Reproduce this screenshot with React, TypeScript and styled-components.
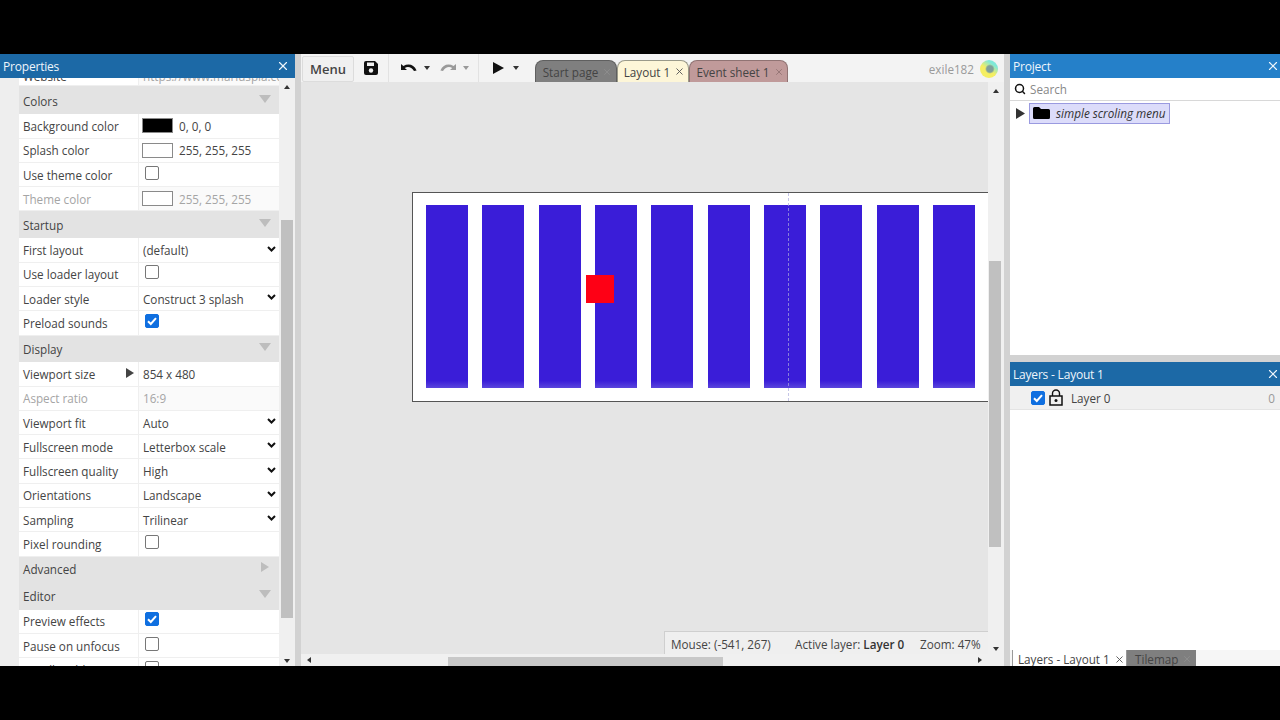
import styled, { createGlobalStyle } from 'styled-components'
import { Search, X } from 'lucide-react'

const GlobalStyle = createGlobalStyle`
  html, body {
    margin: 0;
    padding: 0;
    background: #000;
  }
  * {
    box-sizing: border-box;
  }
`

type PropRow =
  | { kind: 'section'; label: string; closed?: boolean; height: number; nudge?: boolean }
  | { kind: 'color'; label: string; swatch: string; value: string; disabled?: boolean }
  | { kind: 'check'; label: string; checked?: boolean }
  | { kind: 'select'; label: string; value: string }
  | { kind: 'text'; label: string; value: string; disabled?: boolean; expander?: boolean; clipped?: boolean }

const rows: PropRow[] = [
  { kind: 'text', label: 'Website', value: 'https://www.mariuspla.co', clipped: true },
  { kind: 'section', label: 'Colors', height: 28, nudge: true },
  { kind: 'color', label: 'Background color', swatch: '#000', value: '0, 0, 0' },
  { kind: 'color', label: 'Splash color', swatch: '#fff', value: '255, 255, 255' },
  { kind: 'check', label: 'Use theme color' },
  { kind: 'color', label: 'Theme color', swatch: '#fff', value: '255, 255, 255', disabled: true },
  { kind: 'section', label: 'Startup', height: 27, nudge: true },
  { kind: 'select', label: 'First layout', value: '(default)' },
  { kind: 'check', label: 'Use loader layout' },
  { kind: 'select', label: 'Loader style', value: 'Construct 3 splash' },
  { kind: 'check', label: 'Preload sounds', checked: true },
  { kind: 'section', label: 'Display', height: 26.6 },
  { kind: 'text', label: 'Viewport size', value: '854 x 480', expander: true },
  { kind: 'text', label: 'Aspect ratio', value: '16:9', disabled: true },
  { kind: 'select', label: 'Viewport fit', value: 'Auto' },
  { kind: 'select', label: 'Fullscreen mode', value: 'Letterbox scale' },
  { kind: 'select', label: 'Fullscreen quality', value: 'High' },
  { kind: 'select', label: 'Orientations', value: 'Landscape' },
  { kind: 'select', label: 'Sampling', value: 'Trilinear' },
  { kind: 'check', label: 'Pixel rounding' },
  { kind: 'section', label: 'Advanced', closed: true, height: 25 },
  { kind: 'section', label: 'Editor', height: 28 },
  { kind: 'check', label: 'Preview effects', checked: true },
  { kind: 'check', label: 'Pause on unfocus' },
  { kind: 'check', label: 'Bundle addons' },
]

const bars = Array.from({ length: 10 }, (_, i) => i)

function Chevron() {
  return (
    <svg width="9" height="6" viewBox="0 0 9 6">
      <path d="M1 1l3.5 3.5L8 1" fill="none" stroke="#111" strokeWidth="2" />
    </svg>
  )
}

function Tick() {
  return (
    <svg width="12" height="12" viewBox="0 0 12 12">
      <path d="M2 6.2l2.8 2.8L10 3.2" fill="none" stroke="#fff" strokeWidth="2" />
    </svg>
  )
}

function Caret({ color = '#333' }: { color?: string }) {
  return (
    <svg width="6" height="4" viewBox="0 0 6 4">
      <path d="M0 0h6L3 4z" fill={color} />
    </svg>
  )
}

function Row({ row }: { row: PropRow }) {
  if (row.kind === 'section') {
    return (
      <Section $nudge={row.nudge} style={{ height: row.height }}>
        <span>{row.label}</span>
        <SectionArrow $closed={row.closed} />
      </Section>
    )
  }
  const disabled = 'disabled' in row && row.disabled
  const clipped = row.kind === 'text' && row.clipped
  return (
    <PropLine $clipped={clipped}>
      <PropName $disabled={disabled}>
        {row.label}
        {row.kind === 'text' && row.expander && <Expander />}
      </PropName>
      <PropValue $disabled={disabled || clipped}>
        {row.kind === 'color' && (
          <>
            <Swatch $color={row.swatch} />
            <ColorText>{row.value}</ColorText>
          </>
        )}
        {row.kind === 'check' && <CheckBox $checked={row.checked}>{row.checked && <Tick />}</CheckBox>}
        {row.kind === 'select' && (
          <>
            <span>{row.value}</span>
            <ChevronSlot>
              <Chevron />
            </ChevronSlot>
          </>
        )}
        {row.kind === 'text' && row.value}
      </PropValue>
    </PropLine>
  )
}

export default function App() {
  return (
    <>
      <GlobalStyle />
      <Screen>
        <Side $width={295}>
          <PanelHeader $color="#1c69a6" $inset={5}>
            Properties
            <X size={14} strokeWidth={2} />
          </PanelHeader>
          <PropsBody>
            <PropsGutter />
            <PropsList>
              <PropsScroll>
                {rows.map((row) => (
                  <Row key={row.label} row={row} />
                ))}
              </PropsScroll>
            </PropsList>
            <PropsBar>
              <BarCaret $top>
                <Caret />
              </BarCaret>
              <PropsThumb />
              <BarCaret>
                <Caret />
              </BarCaret>
            </PropsBar>
          </PropsBody>
        </Side>
        <Splitter />
        <Center>
          <Toolbar>
            <MenuButton>Menu</MenuButton>
            <ToolIcon $width={34}>
              <svg width="16" height="16" viewBox="0 0 16 16">
                <path d="M1 3a2 2 0 0 1 2-2h9l3 3v9a2 2 0 0 1-2 2H3a2 2 0 0 1-2-2z" fill="#111" />
                <rect x="4" y="2.5" width="7" height="3.5" fill="#f2f2f2" />
                <circle cx="8" cy="10.5" r="2.2" fill="#f2f2f2" />
              </svg>
            </ToolIcon>
            <Divider />
            <Spacer $width={4} />
            <ToolIcon $width={31}>
              <svg width="16" height="11" viewBox="0 0 16 11">
                <path d="M0 1v6h6L3.8 4.9C6.6 3.2 10.6 3.7 13 8l2.6-.6C13 1.4 7.400 .2 2.400 3z" fill="#111" />
              </svg>
            </ToolIcon>
            <ToolIcon $width={6}>
              <Caret />
            </ToolIcon>
            <Spacer $width={8} />
            <ToolIcon $width={20}>
              <svg width="16" height="11" viewBox="0 0 16 11">
                <path d="M16 1v6h-6l2.200-2.100C9.400 3.200 5.400 3.700 3 8l-2.600-.6C3 1.400 8.600 .2 13.600 3z" fill="#9a9a9a" />
              </svg>
            </ToolIcon>
            <ToolIcon $width={16}>
              <Caret color="#999" />
            </ToolIcon>
            <Spacer $width={4} />
            <Divider />
            <Spacer $width={4} />
            <ToolIcon $width={30}>
              <svg width="11" height="12" viewBox="0 0 11 12">
                <path d="M0 0l11 6-11 6z" fill="#111" />
              </svg>
            </ToolIcon>
            <ToolIcon $width={6}>
              <Caret />
            </ToolIcon>
            <Tabs>
              <Tab $bg="#7f7f7f" $width={82}>
                Start page <X size={10} color="#8f8f8f" />
              </Tab>
              <Tab $bg="#fdf6d8" $width={72} $active>
                Layout 1 <X size={11} color="#555" />
              </Tab>
              <Tab $bg="#c09a9a" $width={99}>
                Event sheet 1 <X size={10} color="#8f7070" />
              </Tab>
            </Tabs>
            <User>
              exile182
              <Avatar />
            </User>
          </Toolbar>
          <Workspace>
            <Canvas>
              <LayoutRect>
                {bars.map((i) => (
                  <Bar key={i} />
                ))}
                <GuideLine />
                <Player />
              </LayoutRect>
              <Status>
                <StatusMouse>Mouse: (-541, 267)</StatusMouse>
                <StatusLayer>
                  Active layer: <b>Layer 0</b>
                </StatusLayer>
                <span>Zoom: 47%</span>
              </Status>
            </Canvas>
            <VBar>
              <BarCaret $top>
                <Caret />
              </BarCaret>
              <VThumb />
              <BarCaret>
                <Caret />
              </BarCaret>
            </VBar>
          </Workspace>
          <HBar>
            <svg width="4" height="6" viewBox="0 0 4 6">
              <path d="M4 0L0 3l4 3z" fill="#333" />
            </svg>
            <HThumb />
            <svg width="4" height="6" viewBox="0 0 4 6">
              <path d="M0 0l4 3-4 3z" fill="#333" />
            </svg>
          </HBar>
        </Center>
        <Splitter />
        <Side $width={270}>
          <ProjectPane>
            <PanelHeader $color="#2580c9" $inset={0}>
              Project
              <X size={14} strokeWidth={2} />
            </PanelHeader>
            <SearchRow>
              <Search size={12} color="#111" strokeWidth={3} />
              Search
            </SearchRow>
            <TreeRow>
              <svg width="9" height="11" viewBox="0 0 9 11">
                <path d="M0 0l9 5.500L0 11z" fill="#333" />
              </svg>
              <TreeItem>
                <svg width="17" height="12" viewBox="0 0 17 12">
                  <path d="M0 1.500A1.500 1.500 0 0 1 1.500 0h4.500l2 2h7.500A1.500 1.500 0 0 1 17 3.500v7a1.500 1.500 0 0 1-1.500 1.500h-14A1.500 1.500 0 0 1 0 10.500z" fill="#000" />
                </svg>
                simple scroling menu
              </TreeItem>
            </TreeRow>
          </ProjectPane>
          <HSplit />
          <PanelHeader $color="#1c69a6" $inset={0}>
            Layers - Layout 1
            <X size={14} strokeWidth={2} />
          </PanelHeader>
          <LayerRow>
            <CheckBox $checked>
              <Tick />
            </CheckBox>
            <svg width="14" height="17" viewBox="0 0 14 17">
              <path d="M3.500 7V4.500a3.500 3.500 0 0 1 7 0V7" fill="none" stroke="#111" strokeWidth="1.400" />
              <rect x="1" y="7" width="12" height="9" fill="none" stroke="#111" strokeWidth="1.500" />
              <circle cx="7" cy="11.500" r="1.500" fill="#111" />
            </svg>
            <LayerName>Layer 0</LayerName>
            <LayerCount>0</LayerCount>
          </LayerRow>
          <LayerFill />
          <BottomTabs>
            <BottomTab $width={114} $inset={5}>
              Layers - Layout 1 <X size={11} color="#555" />
            </BottomTab>
            <BottomTab $width={70} $inset={8} $muted>
              Tilemap <X size={10} color="#8f8f8f" />
            </BottomTab>
          </BottomTabs>
        </Side>
      </Screen>
    </>
  )
}

const Screen = styled.div`
  width: 1280px;
  height: 612px;
  margin: 54px 0;
  display: flex;
  background: #fff;
  overflow: hidden;
  font-family: 'Open Sans', 'Noto Sans', sans-serif;
  font-size: 11.7px;
  color: #444;
`

const Side = styled.div<{ $width: number }>`
  width: ${(p) => p.$width}px;
  flex: none;
  display: flex;
  flex-direction: column;
  min-height: 0;
`

const Splitter = styled.div`
  width: 6px;
  flex: none;
  background: #d2d2d2;
`

const PanelHeader = styled.div<{ $color: string; $inset: number }>`
  height: 24px;
  flex: none;
  display: flex;
  align-items: center;
  justify-content: space-between;
  padding: 0 0 0 3px;
  background: ${(p) => p.$color};
  color: #eef5fb;
  font-size: 12px;
  letter-spacing: -0.2px;
  svg {
    margin-right: ${(p) => p.$inset}px;
  }
`

const PropsBody = styled.div`
  flex: 1;
  display: flex;
  min-height: 0;
  background: #eeeeee;
`

const PropsGutter = styled.div`
  width: 19px;
  flex: none;
`

const PropsList = styled.div`
  width: 260px;
  flex: none;
  overflow: hidden;
`

const PropsScroll = styled.div`
  margin-top: -16px;
`

const Section = styled.div<{ $nudge?: boolean }>`
  display: flex;
  align-items: center;
  justify-content: space-between;
  padding: ${(p) => (p.$nudge ? '1px' : '0')} 8px 0 4px;
  background: #e3e3e3;
  color: #444;
`

const SectionArrow = styled.div<{ $closed?: boolean }>`
  width: 0;
  height: 0;
  margin-bottom: 4px;
  ${(p) =>
    p.$closed
      ? `border-left: 8px solid #bdbdbd; border-top: 5px solid transparent; border-bottom: 5px solid transparent; margin-right: 2px;`
      : `border-top: 8px solid #bdbdbd; border-left: 6px solid transparent; border-right: 6px solid transparent;`}
`

const PropLine = styled.div<{ $clipped?: boolean }>`
  height: 24.3px;
  display: grid;
  grid-template-columns: 120px 140px;
  padding-top: ${(p) => (p.$clipped ? '4px' : '0')};
  background: #fff;
  border-bottom: 1px solid #efefef;
  white-space: nowrap;
  overflow: hidden;
`

const PropName = styled.div<{ $disabled?: boolean }>`
  position: relative;
  display: flex;
  align-items: center;
  padding: 0 0 0 4px;
  border-right: 1px solid #efefef;
  color: ${(p) => (p.$disabled ? '#a5a5a5' : '#444')};
`

const Expander = styled.span`
  position: absolute;
  right: 4px;
  top: 6px;
  border-left: 8px solid #444;
  border-top: 5px solid transparent;
  border-bottom: 5px solid transparent;
`

const PropValue = styled.div<{ $disabled?: boolean }>`
  display: flex;
  align-items: center;
  padding-left: 4px;
  color: ${(p) => (p.$disabled ? '#a5a5a5' : '#444')};
  background: ${(p) => (p.$disabled ? '#fafafa' : '#fff')};
`

const Swatch = styled.div<{ $color: string }>`
  width: 31px;
  height: 15px;
  flex: none;
  margin-left: -1px;
  background: ${(p) => p.$color};
  border: 1px solid #8a8a8a;
`

const ColorText = styled.span`
  margin: 0 0 0 6px;
`

const CheckBox = styled.div<{ $checked?: boolean }>`
  width: 14px;
  height: 14px;
  flex: none;
  margin: 0 0 4px 2px;
  display: flex;
  align-items: center;
  justify-content: center;
  border-radius: 2px;
  background: ${(p) => (p.$checked ? '#0f6fe0' : '#fff')};
  border: 1px solid ${(p) => (p.$checked ? '#0f6fe0' : '#777')};
`

const ChevronSlot = styled.span`
  margin-left: auto;
  margin-right: 3px;
  margin-bottom: 3px;
  display: flex;
`

const PropsBar = styled.div`
  width: 16px;
  flex: none;
  position: relative;
  background: #f0f0f0;
  padding-top: 142px;
`

const PropsThumb = styled.div`
  width: 12px;
  height: 398px;
  margin-left: 2px;
  background: #c0c0c0;
`

const BarCaret = styled.div<{ $top?: boolean }>`
  position: absolute;
  left: 5px;
  line-height: 0;
  ${(p) => (p.$top ? 'top: 7px; transform: rotate(180deg);' : 'bottom: 3px;')}
`

const Center = styled.div`
  flex: 1;
  min-width: 0;
  display: flex;
  flex-direction: column;
  background: #e5e5e5;
`

const Toolbar = styled.div`
  height: 28px;
  flex: none;
  display: flex;
  align-items: center;
  background: #f3f3f3;
`

const MenuButton = styled.button`
  width: 52px;
  height: 26px;
  margin: 1px 0 0 1px;
  padding: 0;
  background: #f0f0f0;
  border: 1px solid #dcdcdc;
  border-radius: 2px;
  font-family: 'Open Sans', sans-serif;
  font-size: 13px;
  font-weight: 600;
  color: #444;
`

const ToolIcon = styled.div<{ $width: number }>`
  width: ${(p) => p.$width}px;
  height: 100%;
  flex: none;
  display: flex;
  align-items: center;
  justify-content: center;
`

const Spacer = styled.div<{ $width: number }>`
  width: ${(p) => p.$width}px;
  flex: none;
`

const Divider = styled.div`
  width: 1px;
  height: 100%;
  flex: none;
  background: #e2e2e2;
`

const Tabs = styled.div`
  height: 22px;
  margin: 6px 0 0 16px;
  align-self: flex-start;
  display: flex;
`

const Tab = styled.div<{ $bg: string; $width: number; $active?: boolean }>`
  width: ${(p) => p.$width}px;
  display: flex;
  align-items: center;
  justify-content: center;
  gap: 4px;
  padding: 0 0 0 3px;
  background: ${(p) => p.$bg};
  border: 1px solid ${(p) => (p.$active ? '#9a9a8a' : 'rgba(0,0,0,0.25)')};
  border-bottom: none;
  border-radius: 8px 8px 0 0;
  color: #444;
  white-space: nowrap;
`

const User = styled.div`
  margin-left: auto;
  margin-right: 6px;
  padding-top: 2px;
  display: flex;
  align-items: center;
  gap: 6px;
  color: #9a9a9a;
`

const Avatar = styled.div`
  width: 18px;
  height: 18px;
  border-radius: 50%;
  background: radial-gradient(circle at 55% 50%, #7f9f9a 0 24%, transparent 36%),
    linear-gradient(35deg, #f4ee62 45%, #7fe8d8 75%);
`

const Workspace = styled.div`
  flex: 1;
  min-height: 0;
  display: flex;
`

const Canvas = styled.div`
  flex: 1;
  position: relative;
  overflow: hidden;
`

const LayoutRect = styled.div`
  position: absolute;
  left: 111px;
  top: 110px;
  width: 620px;
  height: 210px;
  padding: 12px 0 0 13.2px;
  display: flex;
  gap: 14.3px;
  align-items: flex-start;
  background: #fff;
  border: 1px solid #555;
`

const Bar = styled.div`
  width: 42px;
  height: 183px;
  flex: none;
  background: linear-gradient(#3a1dd8 96%, #5a45dc);
`

const GuideLine = styled.div`
  position: absolute;
  left: 375px;
  top: 0;
  bottom: 0;
  border-left: 1px dashed rgba(170, 170, 220, 0.7);
`

const Player = styled.div`
  position: absolute;
  left: 173px;
  top: 82px;
  width: 28px;
  height: 28px;
  background: #fe0015;
`

const Status = styled.div`
  position: absolute;
  right: 0;
  bottom: 0;
  width: 324px;
  height: 23px;
  display: flex;
  align-items: center;
  padding: 1px 0 0 6px;
  background: #efefef;
  border: 1px solid #cfcfcf;
  border-width: 1px 0 0 1px;
  color: #444;
  white-space: nowrap;
  b {
    font-weight: 600;
    color: #333;
  }
`

const StatusMouse = styled.span`
  width: 124px;
  flex: none;
`

const StatusLayer = styled.span`
  width: 125px;
  flex: none;
`

const VBar = styled.div`
  width: 16px;
  flex: none;
  position: relative;
  background: #f0f0f0;
  padding-top: 179px;
`

const VThumb = styled.div`
  width: 12px;
  height: 286px;
  margin-left: 1px;
  background: #c0c0c0;
`

const HBar = styled.div`
  height: 12px;
  flex: none;
  display: flex;
  align-items: center;
  padding-left: 6px;
  background: #f0f0f0;
`

const HThumb = styled.div`
  width: 275px;
  height: 9px;
  margin: 0 255px 0 137px;
  align-self: flex-end;
  background: #c8c8c8;
`

const ProjectPane = styled.div`
  height: 301px;
  flex: none;
  display: flex;
  flex-direction: column;
  background: #fff;
`

const SearchRow = styled.div`
  height: 23px;
  flex: none;
  display: flex;
  align-items: center;
  gap: 4px;
  padding-left: 4px;
  border-bottom: 1px solid #d8d8d8;
  color: #888;
`

const TreeRow = styled.div`
  height: 22px;
  display: flex;
  align-items: center;
  gap: 4px;
  padding: 2px 0 0 6px;
`

const TreeItem = styled.div`
  height: 21px;
  display: flex;
  align-items: center;
  gap: 6px;
  padding: 0 4px 0 3px;
  background: #dcdcfa;
  border: 1px solid #9a9ae0;
  font-style: italic;
  color: #333;
`

const HSplit = styled.div`
  height: 7px;
  flex: none;
  background: #d2d2d2;
`

const LayerRow = styled.div`
  height: 24px;
  flex: none;
  display: flex;
  align-items: center;
  gap: 4px;
  padding: 0 5px 0 16px;
  background: #f0f0f0;
  border-bottom: 1px solid #e4e4e4;
  ${CheckBox} {
    margin: 0 0 0 5px;
  }
`

const LayerName = styled.span`
  margin-left: 4px;
`

const LayerCount = styled.span`
  margin-left: auto;
  color: #999;
`

const LayerFill = styled.div`
  flex: 1;
  background: #fff;
`

const BottomTabs = styled.div`
  height: 16px;
  flex: none;
  display: flex;
  padding-left: 2px;
  background: #f6f6f6;
`

const BottomTab = styled.div<{ $muted?: boolean; $width: number; $inset: number }>`
  width: ${(p) => p.$width}px;
  display: flex;
  align-items: center;
  gap: 4px;
  padding: 2px 0 0 ${(p) => p.$inset}px;
  white-space: nowrap;
  background: ${(p) => (p.$muted ? '#7f7f7f' : '#fff')};
  border-left: 1px solid #999;
  color: #444;
`
